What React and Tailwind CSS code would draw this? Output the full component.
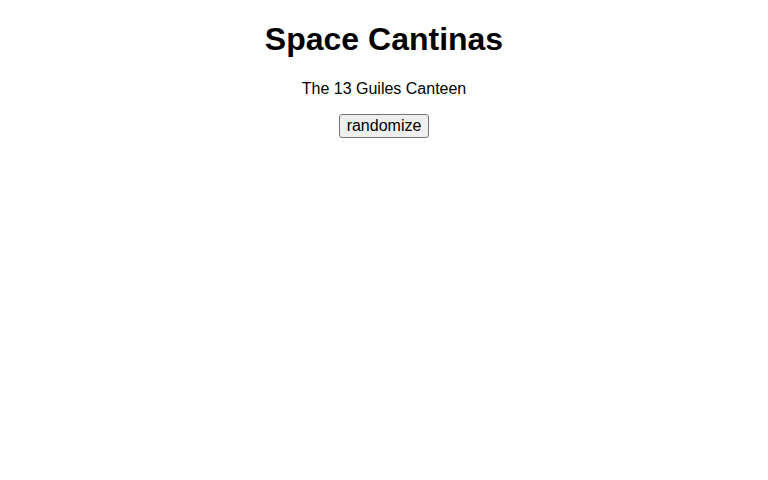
import React, { useState } from 'react';

const NAMES = [
  'The 13 Guiles Canteen',
  'The Rusty Airlock',
  'Nebula Nine Tavern',
  'The Last Orbit Saloon',
];

export default function App() {
  const [idx, setIdx] = useState(0);

  return (
    <div className="min-h-screen bg-white text-black text-center font-['Liberation_Sans',Arial,sans-serif]">
      <h1 className="pt-[21px] text-[32px] leading-[37px] font-bold">Space Cantinas</h1>
      <p className="mt-[22px] text-[16px] leading-[18px]">{NAMES[idx]}</p>
      <div className="mt-[16px]">
        <button
          onClick={() => setIdx((i) => (i + 1) % NAMES.length)}
          className="bg-[#efefef] border border-[#767676] rounded-[3px] px-[7px] py-[2px] text-[16px] leading-[18px]"
        >
          randomize
        </button>
      </div>
    </div>
  );
}
